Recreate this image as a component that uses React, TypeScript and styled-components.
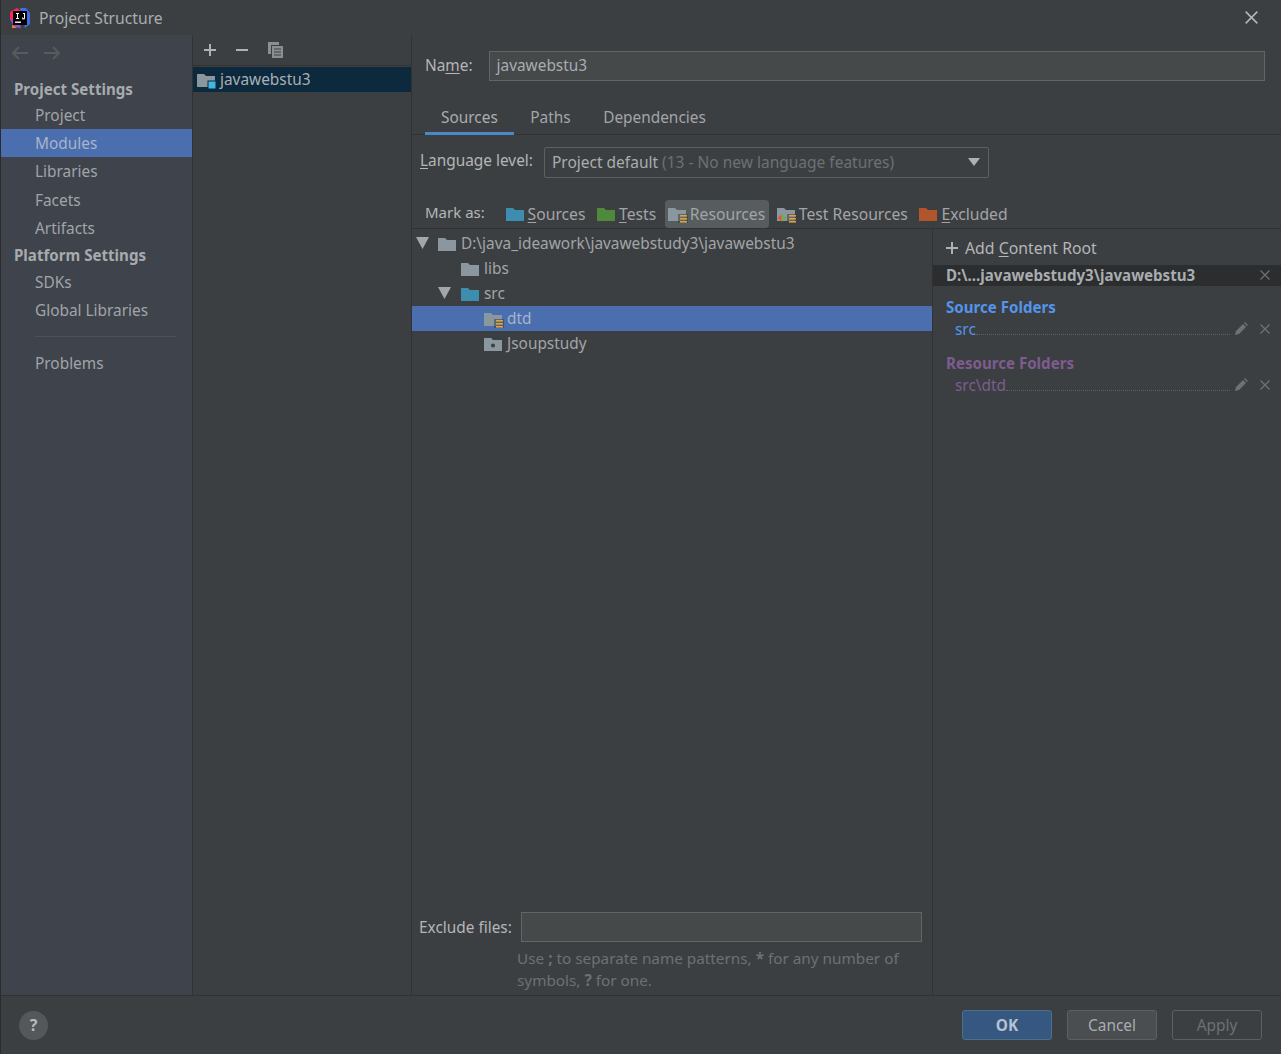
import styled, { createGlobalStyle } from "styled-components";

const GlobalStyle = createGlobalStyle`
  html, body {
    margin: 0;
    padding: 0;
    background: #3c3f41;
  }
  body {
    font-family: "Noto Sans", "Open Sans", "Liberation Sans", sans-serif;
    font-size: 15.4px;
    color: #b4b6b8;
  }
  * {
    box-sizing: border-box;
  }
`;

const Window = styled.div`
  width: 1281px;
  height: 1054px;
  display: flex;
  flex-direction: column;
  background: #3c3f41;
  border-left: 1px solid #2b2b2b;
  overflow: hidden;
`;

const TitleBar = styled.div`
  height: 35px;
  flex: none;
  display: flex;
  align-items: center;
  gap: 8px;
  padding: 0 23px 0 8px;
  color: #a9adb0;
`;

const TitleText = styled.span`
  flex: 1;
  font-size: 15.7px;
`;

const Body = styled.div`
  flex: 1;
  display: flex;
  min-height: 0;
`;

const Sidebar = styled.nav`
  width: 192px;
  flex: none;
  background: #3e434c;
  border-right: 1px solid #323232;
  display: flex;
  flex-direction: column;
`;

const NavArrows = styled.div`
  height: 35px;
  display: flex;
  align-items: center;
  gap: 12px;
  padding: 1px 0 0 9px;
  margin-bottom: 5.5px;
`;

const SectionTitle = styled.div`
  height: 25px;
  display: flex;
  align-items: center;
  padding: 1px 0 0 13px;
  font-size: 15.1px;
  font-weight: 700;
  color: #a8abad;
`;

const NavItem = styled.div<{ $active?: boolean }>`
  height: 28.4px;
  display: flex;
  align-items: center;
  padding: 1px 0 0 34px;
  color: ${(p) => (p.$active ? "#a7b4c9" : "#a2a5a8")};
  background: ${(p) => (p.$active ? "#4b6eaf" : "transparent")};
`;

const NavDivider = styled.div`
  height: 1px;
  background: #4c5058;
  margin: 12px 16px 12px 34px;
`;

const ModuleColumn = styled.div`
  width: 219px;
  flex: none;
  border-right: 1px solid #323232;
  display: flex;
  flex-direction: column;
`;

const ModuleToolbar = styled.div`
  height: 31px;
  display: flex;
  align-items: center;
  gap: 18px;
  padding-left: 10px;
  border-bottom: 1px solid #323232;
`;

const ModuleRow = styled.div`
  height: 25px;
  margin-top: 1px;
  padding-left: 4px;
  display: flex;
  align-items: center;
  gap: 3px;
  background: #0d293e;
  color: #a9b0b5;
`;

const Content = styled.div`
  flex: 1;
  min-width: 0;
  display: flex;
  flex-direction: column;
`;

const NameRow = styled.div`
  height: 61px;
  flex: none;
  display: flex;
  align-items: center;
  gap: 16px;
  padding: 0 16px 0 13px;
`;

const Underlined = styled.span`
  text-decoration: underline;
  text-underline-offset: 2px;
`;

const TextField = styled.div<{ $width?: string }>`
  height: 30px;
  flex: ${(p) => (p.$width ? "none" : "1")};
  width: ${(p) => p.$width ?? "auto"};
  display: flex;
  align-items: center;
  padding-left: 7px;
  background: #45494a;
  border: 1px solid #646464;
  color: #a9adb0;
`;

const Tabs = styled.div`
  height: 39px;
  flex: none;
  display: flex;
  align-items: stretch;
  padding-left: 13px;
  border-bottom: 1px solid #323232;
`;

const Tab = styled.div<{ $active?: boolean }>`
  display: flex;
  align-items: center;
  padding: 6px 16.5px 0 16px;
  height: 39px;
  color: ${(p) => (p.$active ? "#a9adb0" : "#a2a5a8")};
  border-bottom: 3px solid ${(p) => (p.$active ? "#4a88c7" : "transparent")};
`;

const LanguageRow = styled.div`
  height: 54px;
  flex: none;
  display: flex;
  align-items: center;
  gap: 11px;
  padding: 0 0 0 8px;
`;

const LanguageLabel = styled.span`
  margin-top: -3px;
`;

const Combo = styled.div`
  width: 445px;
  height: 31px;
  display: flex;
  align-items: center;
  justify-content: space-between;
  padding: 0 8px 0 7px;
  border: 1px solid #5e6060;
  border-radius: 2px;
  font-size: 15.5px;
  color: #a9adb0;
`;

const Muted = styled.span`
  color: #6e7072;
`;

const MarkRow = styled.div`
  height: 40px;
  flex: none;
  display: flex;
  align-items: flex-end;
  gap: 4.6px;
  padding-left: 13px;
  border-bottom: 1px solid #323232;
`;

const MarkLabel = styled.span`
  width: 73px;
  flex: none;
  align-self: center;
  margin-top: 7px;
  font-size: 15px;
`;

const MarkButton = styled.div<{ $active?: boolean }>`
  height: 28px;
  display: flex;
  align-items: center;
  gap: 2px;
  padding: 0 4px 0 3px;
  border-radius: 4px;
  background: ${(p) => (p.$active ? "#575c5f" : "transparent")};
  font-size: 15.7px;
  color: #a2a5a8;
`;

const Split = styled.div`
  flex: 1;
  min-height: 0;
  display: flex;
`;

const TreePane = styled.div`
  width: 520px;
  flex: none;
  display: flex;
  flex-direction: column;
`;

const Tree = styled.div`
  flex: 1;
  padding-top: 2px;
`;

const TreeRow = styled.div<{ $level: number; $selected?: boolean }>`
  height: 25px;
  display: flex;
  align-items: center;
  gap: 3px;
  padding-left: ${(p) => 26 + p.$level * 23}px;
  background: ${(p) => (p.$selected ? "#4b6eaf" : "transparent")};
  color: ${(p) => (p.$selected ? "#a7b4c9" : "#a2a5a8")};
  position: relative;
`;

const Caret = styled.svg<{ $left: number }>`
  position: absolute;
  top: 6px;
  left: ${(p) => p.$left}px;
`;

const ExcludeRow = styled.div`
  display: flex;
  align-items: center;
  gap: 9px;
  padding-left: 7px;
`;

const Hint = styled.div`
  margin: 5px 0 4px 105px;
  color: #6e7072;
  font-size: 15.3px;
  height: 44px;

  b {
    font-weight: 700;
  }
`;

const HintLine = styled.div`
  height: 22px;
  line-height: 22px;
  white-space: nowrap;
`;

const RootPane = styled.div`
  flex: 1;
  border-left: 1px solid #323232;
`;

const AddRoot = styled.div`
  height: 36px;
  display: flex;
  align-items: center;
  gap: 6px;
  padding: 2px 0 0 12px;
  font-size: 15.8px;
`;

const RootHeader = styled.div`
  height: 21px;
  display: flex;
  align-items: center;
  justify-content: space-between;
  padding: 0 11px 1px 13px;
  background: #2b2d2f;
  font-size: 15.1px;
  font-weight: 700;
  color: #a9adb0;
`;

const FolderTitle = styled.div<{ $color: string }>`
  margin: 10px 0 0 13px;
  height: 22px;
  display: flex;
  align-items: center;
  font-size: 15.1px;
  font-weight: 700;
  color: ${(p) => p.$color};
`;

const FolderRow = styled.div<{ $color: string }>`
  height: 24px;
  display: flex;
  align-items: center;
  padding: 0 11px 2px 22px;
  color: ${(p) => p.$color};
`;

const Leader = styled.span`
  flex: 1;
  align-self: flex-end;
  margin: 0 4px 5px 0;
  border-bottom: 1px dotted #5f6265;
`;

const RowIcons = styled.span`
  display: flex;
  align-items: center;
  gap: 12px;
`;

const Footer = styled.div`
  height: 59px;
  flex: none;
  display: flex;
  align-items: center;
  gap: 15px;
  padding: 0 19px 0 18px;
  border-top: 1px solid #323232;
`;

const HelpButton = styled.div`
  width: 29px;
  height: 29px;
  margin-right: auto;
  border-radius: 50%;
  background: #54585a;
  color: #bbbbbb;
  font-weight: 700;
  font-size: 16px;
  display: flex;
  align-items: center;
  justify-content: center;
`;

const DialogButton = styled.div<{ $variant?: "primary" | "disabled" }>`
  width: 90px;
  height: 30px;
  display: flex;
  align-items: center;
  justify-content: center;
  border-radius: 3px;
  border: 1px solid
    ${(p) => (p.$variant === "primary" ? "#4c708c" : "#5e6060")};
  background: ${(p) =>
    p.$variant === "primary"
      ? "#365880"
      : p.$variant === "disabled"
        ? "transparent"
        : "#4a4e50"};
  color: ${(p) =>
    p.$variant === "primary"
      ? "#b5c2d0"
      : p.$variant === "disabled"
        ? "#6e7072"
        : "#a9adb0"};
  font-weight: ${(p) => (p.$variant === "primary" ? 700 : 400)};
`;

const IconBox = styled.svg`
  flex: none;
`;

const Folder = ({ color = "#8a979f", stack, testMark, module: mod, pkg }: {
  color?: string;
  stack?: boolean;
  testMark?: boolean;
  module?: boolean;
  pkg?: boolean;
}) => (
  <IconBox width="20" height="18" viewBox="0 0 20 18">
    <path d="M0 3h7l2 2h9v11H0z" fill={color} />
    {pkg && <circle cx="9" cy="10.5" r="2" fill="#3c3f41" />}
    {mod && <rect x="11" y="10" width="8" height="8" fill="#40b6e0" stroke="#0d293e" />}
    {stack && (
      <g>
        <rect x="10" y="9" width="10" height="9" fill="#3c3f41" opacity="0.55" />
        <g fill="#d9a343">
          <rect x="12" y="10" width="7" height="1.6" />
          <rect x="12" y="13" width="7" height="1.6" />
          <rect x="12" y="16" width="7" height="1.6" />
        </g>
      </g>
    )}
    {testMark && (
      <g>
        <path d="M4.5 9.5v7l-4-3.5z" fill="#e05a24" />
        <path d="M5.5 9.5v7l4-3.5z" fill="#62b543" />
      </g>
    )}
  </IconBox>
);

const Plus = ({ size = 14 }: { size?: number }) => (
  <svg width={size} height={size} viewBox="0 0 14 14">
    <path d="M7 1v12M1 7h12" stroke="#afb1b3" strokeWidth="2" />
  </svg>
);

const Close = ({ color = "#6f7274", size = 10 }: { color?: string; size?: number }) => (
  <svg width={size} height={size} viewBox="0 0 10 10">
    <path d="M0.5 0.5l9 9M9.5 0.5l-9 9" stroke={color} strokeWidth="1.2" />
  </svg>
);

const Pencil = () => (
  <svg width="14" height="14" viewBox="0 0 14 14">
    <path d="M1 13l1-4 7-7 3 3-7 7z" fill="#6f7274" />
    <path d="M10 1l1-1 3 3-1 1z" fill="#6f7274" />
  </svg>
);

const Arrow = ({ dir }: { dir: "left" | "right" }) => (
  <svg width="20" height="16" viewBox="0 0 20 16">
    <path
      d={dir === "left" ? "M18 8H3M9 2L3 8l6 6" : "M2 8h15M11 2l6 6-6 6"}
      stroke="#585b5d"
      strokeWidth="2"
      fill="none"
    />
  </svg>
);

const Logo = () => (
  <IconBox width="22" height="22" viewBox="0 0 22 22">
    <path d="M1 5l7-4 4 3-8 9-3-1z" fill="#fe2857" />
    <path d="M11 1h6l4 5v11l-5 4z" fill="#3d6dea" />
    <path d="M1 12l4 8 7 1-3-9z" fill="#9a4fd0" />
    <path d="M3 18l5 3-5 0z" fill="#fc801d" />
    <rect x="4" y="4" width="14" height="14" fill="#000" />
    <rect x="6" y="14.5" width="6" height="1.4" fill="#fff" />
    <path d="M7 6h3v1H9v4h1v1H7v-1h1V7H7zM14 6h2v5a1.4 1.4 0 0 1-3 0v-.5h1v.5q.5.6 1 0V7h-1z" fill="#fff" />
  </IconBox>
);

const Copy = () => (
  <svg width="18" height="18" viewBox="0 0 18 18">
    <path d="M1 1h11v3H4v9H1z" fill="#8c8f91" />
    <path d="M5 5h11v12H5z" fill="#8c8f91" />
    <path d="M7 8h7M7 11h7M7 14h7" stroke="#3c3f41" strokeWidth="1.2" />
  </svg>
);

const CaretDown = () => (
  <svg width="12" height="8" viewBox="0 0 12 8">
    <path d="M0 0h12L6 8z" fill="#afb1b3" />
  </svg>
);

const TreeCaret = ({ left }: { left: number }) => (
  <Caret $left={left} width="13" height="12" viewBox="0 0 13 12">
    <path d="M0 0h13L6.5 12z" fill="#a4a7a9" />
  </Caret>
);

export default function App() {
  return (
    <>
      <GlobalStyle />
      <Window>
        <TitleBar>
          <Logo />
          <TitleText>Project Structure</TitleText>
          <Close color="#b4b6b8" size={13} />
        </TitleBar>
        <Body>
          <Sidebar>
            <NavArrows>
              <Arrow dir="left" />
              <Arrow dir="right" />
            </NavArrows>
            <SectionTitle>Project Settings</SectionTitle>
            <NavItem>Project</NavItem>
            <NavItem $active>Modules</NavItem>
            <NavItem>Libraries</NavItem>
            <NavItem>Facets</NavItem>
            <NavItem>Artifacts</NavItem>
            <SectionTitle>Platform Settings</SectionTitle>
            <NavItem>SDKs</NavItem>
            <NavItem>Global Libraries</NavItem>
            <NavDivider />
            <NavItem>Problems</NavItem>
          </Sidebar>
          <ModuleColumn>
            <ModuleToolbar>
              <Plus />
              <svg width="14" height="14" viewBox="0 0 14 14">
                <path d="M1 7h12" stroke="#afb1b3" strokeWidth="2" />
              </svg>
              <Copy />
            </ModuleToolbar>
            <ModuleRow>
              <Folder module />
              javawebstu3
            </ModuleRow>
          </ModuleColumn>
          <Content>
            <NameRow>
              <span>
                Na<Underlined>m</Underlined>e:
              </span>
              <TextField>javawebstu3</TextField>
            </NameRow>
            <Tabs>
              <Tab $active>Sources</Tab>
              <Tab>Paths</Tab>
              <Tab>Dependencies</Tab>
            </Tabs>
            <LanguageRow>
              <LanguageLabel>
                <Underlined>L</Underlined>anguage level:
              </LanguageLabel>
              <Combo>
                <span>
                  Project default <Muted>(13 - No new language features)</Muted>
                </span>
                <CaretDown />
              </Combo>
            </LanguageRow>
            <MarkRow>
              <MarkLabel>Mark as:</MarkLabel>
              <MarkButton>
                <Folder color="#3d8eae" />
                <span>
                  <Underlined>S</Underlined>ources
                </span>
              </MarkButton>
              <MarkButton>
                <Folder color="#4f8a3c" />
                <span>
                  <Underlined>T</Underlined>ests
                </span>
              </MarkButton>
              <MarkButton $active>
                <Folder stack />
                Resources
              </MarkButton>
              <MarkButton>
                <Folder stack testMark />
                Test Resources
              </MarkButton>
              <MarkButton>
                <Folder color="#b1562c" />
                <span>
                  <Underlined>E</Underlined>xcluded
                </span>
              </MarkButton>
            </MarkRow>
            <Split>
              <TreePane>
                <Tree>
                  <TreeRow $level={0}>
                    <TreeCaret left={4} />
                    <Folder />
                    D:\java_ideawork\javawebstudy3\javawebstu3
                  </TreeRow>
                  <TreeRow $level={1}>
                    <Folder />
                    libs
                  </TreeRow>
                  <TreeRow $level={1}>
                    <TreeCaret left={26} />
                    <Folder color="#3d8eae" />
                    src
                  </TreeRow>
                  <TreeRow $level={2} $selected>
                    <Folder stack />
                    dtd
                  </TreeRow>
                  <TreeRow $level={2}>
                    <Folder pkg />
                    Jsoupstudy
                  </TreeRow>
                </Tree>
                <ExcludeRow>
                  <span>Exclude files:</span>
                  <TextField $width="401px" />
                </ExcludeRow>
                <Hint>
                  <HintLine>
                    Use <b>;</b> to separate name patterns, <b>*</b> for any number of
                  </HintLine>
                  <HintLine>
                    symbols, <b>?</b> for one.
                  </HintLine>
                </Hint>
              </TreePane>
              <RootPane>
                <AddRoot>
                  <Plus />
                  <span>
                    Add <Underlined>C</Underlined>ontent Root
                  </span>
                </AddRoot>
                <RootHeader>
                  D:\...javawebstudy3\javawebstu3
                  <Close />
                </RootHeader>
                <FolderTitle $color="#5394ec">Source Folders</FolderTitle>
                <FolderRow $color="#5394ec">
                  src
                  <Leader />
                  <RowIcons>
                    <Pencil />
                    <Close />
                  </RowIcons>
                </FolderRow>
                <FolderTitle $color="#7e5c8f">Resource Folders</FolderTitle>
                <FolderRow $color="#7e5c8f">
                  src\dtd
                  <Leader />
                  <RowIcons>
                    <Pencil />
                    <Close />
                  </RowIcons>
                </FolderRow>
              </RootPane>
            </Split>
          </Content>
        </Body>
        <Footer>
          <HelpButton>?</HelpButton>
          <DialogButton $variant="primary">OK</DialogButton>
          <DialogButton>Cancel</DialogButton>
          <DialogButton $variant="disabled">Apply</DialogButton>
        </Footer>
      </Window>
    </>
  );
}
